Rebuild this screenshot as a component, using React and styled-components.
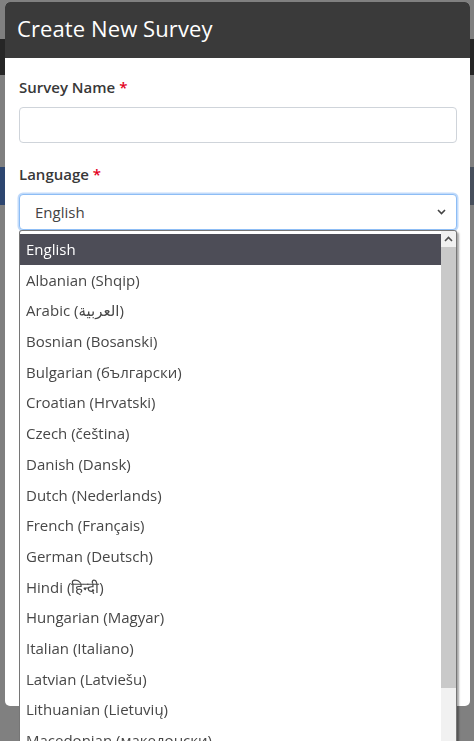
import React from "react";
import styled, { createGlobalStyle } from "styled-components";

const GlobalStyle = createGlobalStyle`
  html, body {
    margin: 0;
    padding: 0;
    height: 100%;
    overflow: hidden;
    background: #808080;
    font-family: "Open Sans", "DejaVu Sans", sans-serif;
  }
`;

const Page = styled.div`
  height: 741px;
  display: flex;
  flex-direction: column;
  background: #808080;
`;

const NavBar = styled.div`
  margin-top: 39px;
  height: 36px;
  background: #262626;
`;

const Banner = styled.div`
  margin-top: 92px;
  height: 38px;
  background: linear-gradient(90deg, #2d4670 0%, #2d4670 40%, #474f5c 100%);
`;

const Backdrop = styled.div`
  position: fixed;
  inset: 0;
  padding-top: 2px;
  display: flex;
  flex-direction: column;
  align-items: center;
`;

const Modal = styled.div`
  width: 465px;
  margin-left: 1px;
  height: 704px;
  background: #fff;
  border-radius: 5px;
  display: flex;
  flex-direction: column;
`;

const Header = styled.div`
  height: 56px;
  box-sizing: border-box;
  padding: 0 12px 5px;
  background: #3a3a3a;
  border-radius: 5px 5px 0 0;
  display: flex;
  align-items: center;
`;

const Title = styled.h1`
  margin: 0;
  font-size: 22px;
  font-weight: 400;
  color: #fff;
  letter-spacing: 0.1px;
`;

const Body = styled.div`
  padding: 18px 13px 0 14px;
  display: flex;
  flex-direction: column;
`;

const Field = styled.div`
  display: flex;
  flex-direction: column;
  margin-bottom: ${(p) => p.$gap || 0}px;
  position: relative;
`;

const Label = styled.label`
  font-size: 15px;
  line-height: 22px;
  font-weight: 600;
  color: #383838;
  margin-bottom: ${(p) => p.$gap || 9}px;
`;

const Required = styled.span`
  color: #e3001b;
`;

const TextInput = styled.div`
  height: 34px;
  border: 1px solid #cfd4da;
  border-radius: 4px;
  background: #fff;
`;

const Select = styled.div`
  height: 34px;
  border: 1px solid #8dbdf5;
  box-shadow: 0 0 0 1.5px rgba(120, 175, 245, 0.45);
  border-radius: 4px;
  background: #fff;
  display: flex;
  align-items: center;
  justify-content: space-between;
  padding: 0 10px 0 15px;
  font-size: 15px;
  color: #444;
`;

const Dropdown = styled.div`
  position: absolute;
  top: 100%;
  left: 0;
  right: 0;
  height: 520px;
  border: 1px solid #767676;
  border-bottom: none;
  border-radius: 3px 3px 0 0;
  background: #fff;
  box-shadow: 2px 2px 2px rgba(0, 0, 0, 0.35);
  display: flex;
  overflow: hidden;
`;

const Options = styled.ul`
  list-style: none;
  margin: 0;
  padding: 3px 0 0;
  flex: 1;
`;

const Option = styled.li`
  height: 30.7px;
  line-height: 30.7px;
  padding-left: 6px;
  font-size: 15px;
  color: ${(p) => (p.$active ? "#fff" : "#474747")};
  background: ${(p) => (p.$active ? "#4d4d57" : "transparent")};
  white-space: nowrap;
`;

const Scrollbar = styled.div`
  width: 15px;
  background: #f1f1f1;
  display: flex;
  flex-direction: column;
  align-items: stretch;
`;

const ArrowButton = styled.div`
  height: 16px;
  display: flex;
  align-items: center;
  justify-content: center;
`;

const Thumb = styled.div`
  height: 441px;
  background: #c9c9c9;
`;

const Chevron = ({ up }) => (
  <svg width="9" height="6" viewBox="0 0 9 6">
    <path
      d={up ? "M1 5 L4.5 1.5 L8 5" : "M1 1 L4.5 4.5 L8 1"}
      fill="none"
      stroke={up ? "#505050" : "#444"}
      strokeWidth="1.6"
    />
  </svg>
);

const languages = [
  "English",
  "Albanian (Shqip)",
  "Arabic (العربية)",
  "Bosnian (Bosanski)",
  "Bulgarian (български)",
  "Croatian (Hrvatski)",
  "Czech (čeština)",
  "Danish (Dansk)",
  "Dutch (Nederlands)",
  "French (Français)",
  "German (Deutsch)",
  "Hindi (हिन्दी)",
  "Hungarian (Magyar)",
  "Italian (Italiano)",
  "Latvian (Latviešu)",
  "Lithuanian (Lietuvių)",
  "Macedonian (македонски)",
];

export default function App() {
  return (
    <>
      <GlobalStyle />
      <Page>
        <NavBar />
        <Banner />
      </Page>
      <Backdrop>
        <Modal>
          <Header>
            <Title>Create New Survey</Title>
          </Header>
          <Body>
            <Field $gap={20}>
              <Label>
                Survey Name <Required>*</Required>
              </Label>
              <TextInput />
            </Field>
            <Field>
              <Label $gap={9}>
                Language <Required>*</Required>
              </Label>
              <Select>
                <span>English</span>
                <Chevron />
              </Select>
              <Dropdown>
                <Options>
                  {languages.map((l, i) => (
                    <Option key={l} $active={i === 0}>
                      {l}
                    </Option>
                  ))}
                </Options>
                <Scrollbar>
                  <ArrowButton>
                    <Chevron up />
                  </ArrowButton>
                  <Thumb />
                </Scrollbar>
              </Dropdown>
            </Field>
          </Body>
        </Modal>
      </Backdrop>
    </>
  );
}
